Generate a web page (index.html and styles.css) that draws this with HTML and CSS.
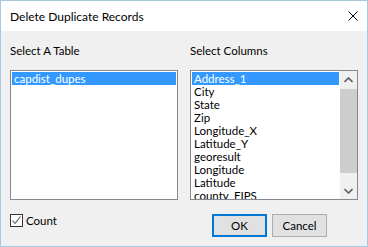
FILE: index.html
```html
<!DOCTYPE html>
<html>
<head>
<meta charset="utf-8">
<link rel="stylesheet" href="styles.css">
</head>
<body>
<div class="win">
  <div class="titlebar">
    <span class="title">Delete Duplicate Records</span>
    <svg class="close" width="10" height="10" viewBox="0 0 10 10"><path d="M0.5 0.5 L9.5 9.5 M9.5 0.5 L0.5 9.5" stroke="#000" stroke-width="1" fill="none"/></svg>
  </div>
  <div class="content">
    <div class="cols">
      <div class="col">
        <div class="label">Select A Table</div>
        <div class="listbox">
          <div class="items">
            <div class="item sel">capdist_dupes</div>
          </div>
        </div>
      </div>
      <div class="col">
        <div class="label">Select Columns</div>
        <div class="listbox">
          <div class="items">
            <div class="item sel">Address_1</div>
            <div class="item">City</div>
            <div class="item">State</div>
            <div class="item">Zip</div>
            <div class="item">Longitude_X</div>
            <div class="item">Latitude_Y</div>
            <div class="item">georesult</div>
            <div class="item">Longitude</div>
            <div class="item">Latitude</div>
            <div class="item">county_FIPS</div>
          </div>
          <div class="scrollbar">
            <div class="arrow"><svg width="9" height="6" viewBox="0 0 9 6"><path d="M0.5 5 L4.5 1 L8.5 5" stroke="#606060" stroke-width="1.6" fill="none"/></svg></div>
            <div class="track"><div class="thumb"></div></div>
            <div class="arrow"><svg width="9" height="6" viewBox="0 0 9 6"><path d="M0.5 1 L4.5 5 L8.5 1" stroke="#606060" stroke-width="1.6" fill="none"/></svg></div>
          </div>
        </div>
      </div>
    </div>
    <div class="footer">
      <label class="check">
        <span class="box"><svg width="11" height="11" viewBox="0 0 11 11"><path d="M1.5 5.5 L4 8.5 L9.5 1.5" stroke="#555" stroke-width="1.1" fill="none"/></svg></span>
        <span>Count</span>
      </label>
      <div class="buttons">
        <button class="btn default">OK</button>
        <button class="btn">Cancel</button>
      </div>
    </div>
  </div>
</div>
</body>
</html>
```
FILE: styles.css
```css
html, body {
  margin: 0;
  padding: 0;
}
body {
  font-family: Lato, "Liberation Sans", sans-serif;
  font-size: 11.5px;
  color: #000;
}
.win {
  width: 368px;
  height: 247px;
  box-sizing: border-box;
  border: 1px solid #a9c9df;
  background: #f0f0f0;
  display: flex;
  flex-direction: column;
}
.titlebar {
  height: 30px;
  background: #fff;
  display: flex;
  align-items: center;
  justify-content: space-between;
  padding: 0 9px 0 9px;
  flex: none;
}
.title {
  font-size: 12px;
  color: #000;
}
.close {
  display: block;
}
.content {
  padding: 12px 9px 0 9px;
}
.cols {
  display: grid;
  grid-template-columns: 168px 168px;
  column-gap: 12px;
}
.label {
  height: 16px;
  line-height: 16px;
  margin-bottom: 11px;
}
.listbox {
  height: 130px;
  box-sizing: border-box;
  border: 1px solid #828790;
  background: #fff;
  display: flex;
  overflow: hidden;
}
.items {
  flex: 1;
  padding: 1px;
  overflow: hidden;
}
.item {
  height: 13px;
  line-height: 13px;
  padding-left: 2px;
  white-space: nowrap;
}
.item.sel {
  background: #3399ff;
  color: #fff;
}
.scrollbar {
  width: 17px;
  flex: none;
  background: #f0f0f0;
  display: flex;
  flex-direction: column;
}
.arrow {
  height: 17px;
  display: flex;
  align-items: center;
  justify-content: center;
  flex: none;
}
.arrow svg {
  display: block;
}
.track {
  flex: 1;
  padding-top: 1px;
}
.thumb {
  height: 84px;
  background: #cdcdcd;
}
.footer {
  margin-top: 14px;
  display: grid;
  grid-template-columns: 168px 168px;
  column-gap: 12px;
  height: 23px;
}
.check {
  display: flex;
  align-items: flex-start;
  gap: 3px;
}
.box {
  width: 13px;
  height: 13px;
  box-sizing: border-box;
  border: 1px solid #333;
  background: #fff;
  display: flex;
  align-items: center;
  justify-content: center;
}
.box svg {
  display: block;
}
.check span:last-child {
  line-height: 13px;
  color: #000;
}
.buttons {
  display: flex;
  gap: 5px;
  padding-left: 22px;
}
.btn {
  width: 55px;
  height: 23px;
  box-sizing: border-box;
  border: 1px solid #adadad;
  background: #e1e1e1;
  font-family: Lato, "Liberation Sans", sans-serif;
  font-size: 11.5px;
  color: #000;
  padding: 0;
  margin: 0;
}
.btn.default {
  border: 2px solid #0078d7;
}
```
